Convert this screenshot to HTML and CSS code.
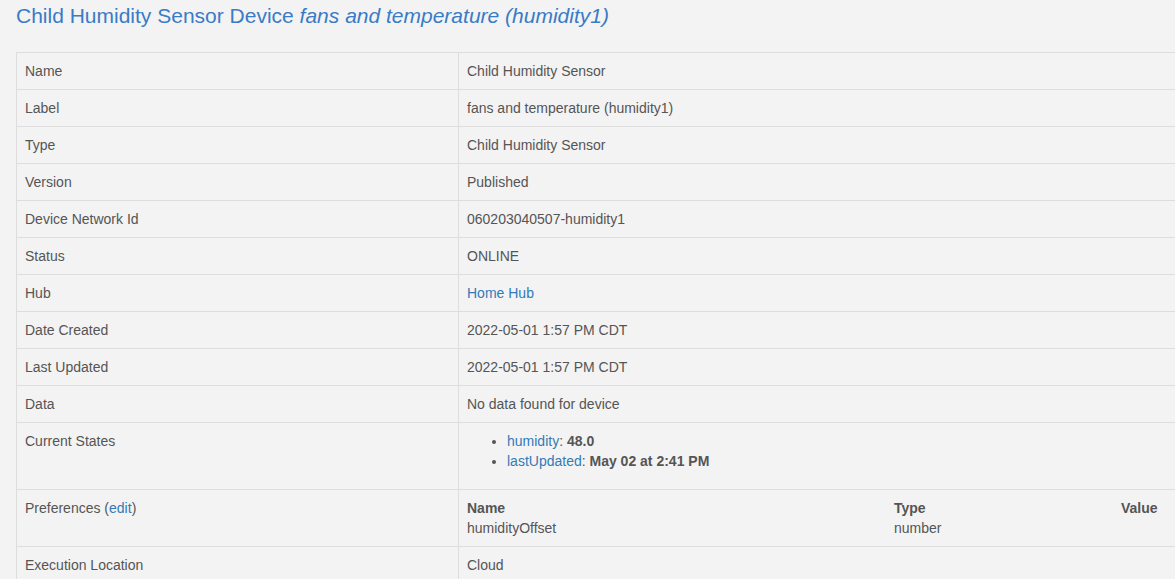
FILE: index.html
```html
<!DOCTYPE html>
<html>
<head>
<meta charset="utf-8">
<link rel="stylesheet" href="styles.css">
</head>
<body>
<div class="page">
  <h1 class="title">Child Humidity Sensor Device <em>fans and temperature (humidity1)</em></h1>
  <table class="info">
    <tbody>
      <tr><td class="key">Name</td><td>Child Humidity Sensor</td></tr>
      <tr><td class="key">Label</td><td>fans and temperature (humidity1)</td></tr>
      <tr><td class="key">Type</td><td>Child Humidity Sensor</td></tr>
      <tr><td class="key">Version</td><td>Published</td></tr>
      <tr><td class="key">Device Network Id</td><td>060203040507-humidity1</td></tr>
      <tr><td class="key">Status</td><td>ONLINE</td></tr>
      <tr><td class="key">Hub</td><td><a href="#">Home Hub</a></td></tr>
      <tr><td class="key">Date Created</td><td>2022-05-01 1:57 PM CDT</td></tr>
      <tr><td class="key">Last Updated</td><td>2022-05-01 1:57 PM CDT</td></tr>
      <tr><td class="key">Data</td><td>No data found for device</td></tr>
      <tr><td class="key">Current States</td><td>
        <ul class="states">
          <li><a href="#">humidity</a>: <strong>48.0</strong></li>
          <li><a href="#">lastUpdated</a>: <strong>May 02 at 2:41 PM</strong></li>
        </ul>
      </td></tr>
      <tr><td class="key">Preferences (<a href="#">edit</a>)</td><td>
        <table class="prefs">
          <tr><th class="c-name">Name</th><th class="c-type">Type</th><th>Value</th></tr>
          <tr><td>humidityOffset</td><td>number</td><td></td></tr>
        </table>
      </td></tr>
      <tr><td class="key">Execution Location</td><td>Cloud</td></tr>
    </tbody>
  </table>
</div>
</body>
</html>
```
FILE: styles.css
```css
html, body {
  margin: 0;
  padding: 0;
  background: #f3f3f3;
  overflow: hidden;
}
body {
  font-family: "Liberation Sans", Arial, sans-serif;
  font-size: 14px;
  line-height: 20px;
  color: #555;
}
.page {
  padding-left: 16px;
}
a {
  color: #337ab7;
  text-decoration: none;
}
.title {
  margin: 0;
  padding-top: 4px;
  height: 52px;
  box-sizing: border-box;
  font-size: 21px;
  line-height: 23px;
  font-weight: normal;
  color: #3a7bc6;
}
.title em {
  font-style: italic;
}
.info {
  border-collapse: collapse;
  width: 1200px;
  border: 1px solid #ddd;
}
.info > tbody > tr > td {
  border: 1px solid #ddd;
  padding: 8px;
  vertical-align: top;
}
.info td.key {
  width: 425px;
}
.states {
  margin: 0 0 10px 0;
  padding-left: 40px;
}
.states strong {
  font-weight: bold;
}
.prefs {
  border-collapse: collapse;
  width: 714px;
}
.prefs th, .prefs td {
  padding: 0;
  text-align: left;
  vertical-align: top;
}
.prefs th {
  font-weight: bold;
}
.prefs .c-name {
  width: 427px;
}
.prefs .c-type {
  width: 227px;
}
```
